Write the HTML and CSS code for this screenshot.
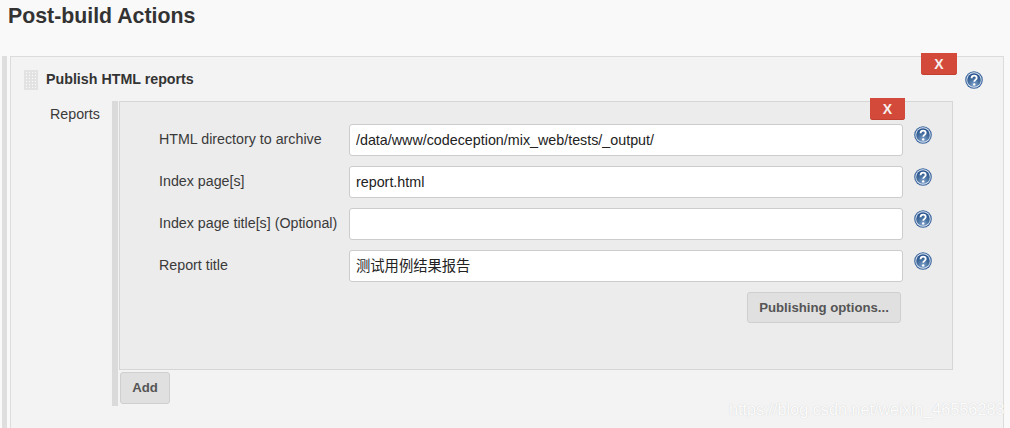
FILE: index.html
```html
<!DOCTYPE html>
<html lang="en">
<head>
<meta charset="utf-8">
<title>Post-build Actions</title>
<link rel="stylesheet" href="styles.css">
</head>
<body>
<svg class="defs" width="0" height="0" aria-hidden="true">
  <defs>
    <radialGradient id="helpfill" cx="50%" cy="85%" r="75%">
      <stop offset="0" stop-color="#86a5cf"/>
      <stop offset="0.55" stop-color="#46709f"/>
      <stop offset="1" stop-color="#2a548e"/>
    </radialGradient>
    <symbol id="help" viewBox="0 0 18 18">
      <circle cx="9" cy="9" r="8.8" fill="#3a659e"/>
      <circle cx="9" cy="9" r="7.7" fill="#dbe4f0"/>
      <circle cx="9" cy="9" r="6.8" fill="url(#helpfill)"/>
      <path d="M6.5 7.2C6.6 5.4 7.7 4.7 9.1 4.7c1.6 0 2.6.9 2.6 2.2 0 1.9-2.5 2-2.5 3.9" fill="none" stroke="#fff" stroke-width="1.8"/>
      <circle cx="9.2" cy="13.4" r="1.2" fill="#fff"/>
    </symbol>
  </defs>
</svg>

<h1 class="section-title">Post-build Actions</h1>

<section class="outer">
  <div class="outer-panel">
    <button class="delete delete-outer" type="button">X</button>
    <div class="outer-head">
      <span class="handle"></span>
      <span class="step-name">Publish HTML reports</span>
      <svg class="help help-outer"><use href="#help"/></svg>
    </div>
    <div class="reports">
      <div class="reports-label">Reports</div>
      <div class="reports-list">
        <div class="report">
          <button class="delete delete-inner" type="button">X</button>
          <div class="fields">
            <label class="field-label">HTML directory to archive</label>
            <input class="field-input" type="text" value="/data/www/codeception/mix_web/tests/_output/">
            <svg class="help"><use href="#help"/></svg>
            <label class="field-label">Index page[s]</label>
            <input class="field-input" type="text" value="report.html">
            <svg class="help"><use href="#help"/></svg>
            <label class="field-label">Index page title[s] (Optional)</label>
            <input class="field-input" type="text" value="">
            <svg class="help"><use href="#help"/></svg>
            <label class="field-label">Report title</label>
            <input class="field-input field-input-cjk" type="text" value="测试用例结果报告">
            <svg class="help"><use href="#help"/></svg>
          </div>
          <div class="options">
            <button class="btn btn-options" type="button">Publishing options...</button>
          </div>
        </div>
        <button class="btn btn-add" type="button">Add</button>
      </div>
    </div>
  </div>
</section>

<div class="watermark">https://blog.csdn.net/weixin_46556283</div>
</body>
</html>
```

FILE: styles.css
```css
* { box-sizing: border-box; }
html, body { height: 100%; }
body {
  margin: 0;
  height: 428px;
  overflow: hidden;
  background: #f9f9f9;
  font-family: "Liberation Sans", Arial, "Noto Sans CJK SC", sans-serif;
  color: #333;
  position: relative;
}
.defs { position: absolute; }
.section-title {
  margin: 0;
  padding: 4px 0 0 8px;
  height: 56px;
  font-size: 21.3px;
  line-height: 24px;
  font-weight: 700;
  color: #333;
}
.outer {
  margin-left: 2px;
  padding-left: 5px;
  padding-right: 6px;
  height: 372px;
  background: linear-gradient(to right, #dedede 5px, transparent 5px);
}
.outer-panel {
  position: relative;
  margin-left: 3px;
  height: 372px;
  background: #f3f3f3;
  border: 1px solid #dcdcdc;
  border-bottom: 0;
  padding: 13px 0 0 13px;
}
.outer-head {
  display: flex;
  align-items: center;
  height: 20px;
}
.handle {
  width: 14px;
  height: 20px;
  margin-right: 8px;
  background-color: #fbfbfb;
  background-image:
    linear-gradient(to right, #e2e2e2 2px, transparent 2px),
    linear-gradient(to bottom, #e4e4e4 2px, transparent 2px);
  background-size: 3px 3px;
}
.step-name {
  font-size: 14.25px;
  line-height: 18px;
  padding-bottom: 2px;
  font-weight: 700;
  color: #333;
}
.help { width: 18px; height: 18px; display: block; }
.help-outer { position: absolute; left: 954px; top: 14px; }
.delete {
  position: absolute;
  border: 0;
  padding: 0;
  background: #d34a3a;
  color: #f7f0ee;
  font: 700 14px/20px "Liberation Sans", Arial, sans-serif;
  border-radius: 0 0 3px 3px;
  box-shadow: inset 0 -1px 0 #c24032;
}
.delete-outer { left: 910px; top: -4px; width: 36px; height: 22px; }
.delete-inner { left: 750px; top: -4px; width: 35px; height: 22px; }
.reports {
  display: flex;
  margin-top: 11px;
}
.reports-label {
  width: 88px;
  padding: 5px 0 0 26px;
  font-size: 14.25px;
  line-height: 16px;
  color: #3a3a3a;
}
.reports-list {
  width: 842px;
  height: 305px;
  padding-left: 7px;
  background: linear-gradient(to right, #dadada 6px, transparent 6px);
}
.report {
  position: relative;
  width: 834px;
  height: 269px;
  background: #ececec;
  border: 1px solid #d6d6d6;
  padding-top: 22px;
}
.fields {
  display: grid;
  grid-template-columns: 229px 554px 18px;
  grid-auto-rows: 32px;
  row-gap: 10px;
  column-gap: 0;
  align-items: center;
}
.field-label {
  padding: 0 0 2px 39px;
  font-size: 14.25px;
  color: #3a3a3a;
  position: relative;
}
.field-input {
  width: 554px;
  height: 32px;
  border: 1px solid #ccc;
  border-radius: 3px;
  background: #fff;
  padding: 0 6px;
  font: 14.3px "Liberation Sans", Arial, "Noto Sans CJK SC", sans-serif;
  color: #222;
  outline: 0;
}
.field-input-cjk { padding-bottom: 3px; }
.fields .help { align-self: start; margin: 2px 0 0 11px; }
.options {
  display: flex;
  justify-content: flex-end;
  padding: 10px 51px 0 0;
}
.btn {
  background: #e0e0e0;
  border: 1px solid #cfcfcf;
  border-radius: 3px;
  color: #555;
  font: 700 13.2px "Liberation Sans", Arial, sans-serif;
  padding: 0;
}
.btn-options { width: 154px; height: 31px; }
.btn-add { display: block; width: 50px; height: 32px; margin: 2px 0 0 1px; padding-bottom: 2px; }
.watermark {
  position: absolute;
  left: 729px;
  top: 400px;
  font-size: 16.2px;
  line-height: 18px;
  color: rgba(255,255,255,0.95);
  text-shadow: 0 0 1px rgba(175,175,175,0.6);
  white-space: nowrap;
}
```
